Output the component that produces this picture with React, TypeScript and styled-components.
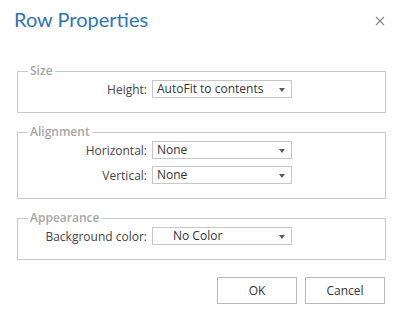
import styled, { createGlobalStyle } from 'styled-components';

const GlobalStyle = createGlobalStyle`
  html, body {
    margin: 0;
    padding: 0;
    background: #fff;
  }

  body {
    font-family: 'Open Sans', 'Liberation Sans', sans-serif;
    color: #333;
  }
`;

const Dialog = styled.div`
  width: 402px;
  height: 321px;
  box-sizing: border-box;
  padding: 0 16px 0 17px;
  background: #fff;
`;

const Header = styled.div`
  display: flex;
  justify-content: space-between;
  align-items: flex-start;
  height: 63px;
  margin-left: -3px;
`;

const Title = styled.h1`
  margin: 6px 0 0;
  font-family: Lato, 'Open Sans', sans-serif;
  font-size: 20px;
  font-weight: 400;
  line-height: 26px;
  color: #2e74b5;
`;

const CloseButton = styled.button`
  margin: 15px 0 0;
  padding: 0;
  width: 12px;
  height: 12px;
  border: none;
  background: none;
  display: flex;
  align-items: center;
  justify-content: center;
  cursor: pointer;
`;

const Group = styled.fieldset`
  margin: 0 0 11px;
  padding: 1px 0 14px;
  border: 1px solid #c9c9c9;
`;

const Legend = styled.legend`
  margin-left: 10px;
  padding: 0 2px;
  font-size: 12px;
  line-height: 16px;
  font-weight: 600;
  color: #a6a6a6;
`;

const Rows = styled.div`
  display: grid;
  grid-template-columns: 129px 140px;
  column-gap: 5px;
  row-gap: 7px;
  align-items: center;
`;

const Label = styled.label`
  font-size: 12px;
  text-align: right;
  color: #444;
`;

const Select = styled.div<{ $indent?: boolean }>`
  position: relative;
  height: 18px;
  box-sizing: border-box;
  border: 1px solid #c6c6c6;
  padding-left: ${({ $indent }) => ($indent ? '20px' : '4px')};
  font-size: 12px;
  line-height: 16px;
  color: #333;
  background: #fff;
`;

const Arrow = styled.span`
  position: absolute;
  right: 6px;
  top: 7px;
  width: 0;
  height: 0;
  border-left: 3.5px solid transparent;
  border-right: 3.5px solid transparent;
  border-top: 4px solid #5a5a5a;
`;

const Footer = styled.div`
  display: flex;
  justify-content: flex-end;
  gap: 8px;
  margin-top: 17px;
  margin-right: 1px;
`;

const Button = styled.button`
  width: 80px;
  height: 27px;
  box-sizing: border-box;
  border: 1px solid #b9b9b9;
  background: #fff;
  font-family: 'Open Sans', 'Liberation Sans', sans-serif;
  font-size: 12px;
  color: #333;
  cursor: pointer;
`;

type Field = { label: string; value: string; indent?: boolean };

const groups: { title: string; fields: Field[] }[] = [
  { title: 'Size', fields: [{ label: 'Height:', value: 'AutoFit to contents' }] },
  {
    title: 'Alignment',
    fields: [
      { label: 'Horizontal:', value: 'None' },
      { label: 'Vertical:', value: 'None' },
    ],
  },
  {
    title: 'Appearance',
    fields: [{ label: 'Background color:', value: 'No Color', indent: true }],
  },
];

export default function App() {
  return (
    <>
      <GlobalStyle />
      <Dialog>
        <Header>
          <Title>Row Properties</Title>
          <CloseButton aria-label="Close">
            <svg width="10" height="10" viewBox="0 0 10 10">
              <path d="M1 1 L9 9 M9 1 L1 9" stroke="#8a8a8a" strokeWidth="1.2" />
            </svg>
          </CloseButton>
        </Header>
        {groups.map((g) => (
          <Group key={g.title}>
            <Legend>{g.title}</Legend>
            <Rows>
              {g.fields.map((f) => [
                <Label key={f.label + '-l'}>{f.label}</Label>,
                <Select key={f.label + '-s'} $indent={f.indent}>
                  {f.value}
                  <Arrow />
                </Select>,
              ])}
            </Rows>
          </Group>
        ))}
        <Footer>
          <Button>OK</Button>
          <Button>Cancel</Button>
        </Footer>
      </Dialog>
    </>
  );
}
